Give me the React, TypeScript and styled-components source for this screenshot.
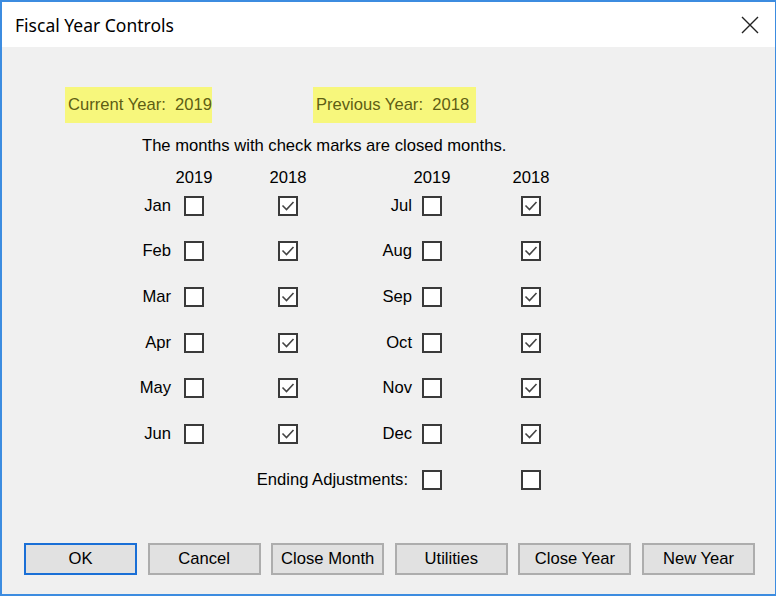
import React from 'react'
import styled, { createGlobalStyle } from 'styled-components'

const GlobalStyle = createGlobalStyle`
  html, body {
    margin: 0;
    padding: 0;
    background: #ffffff;
  }
  #root {
    width: 776px;
    height: 596px;
  }
`

const Window = styled.div`
  box-sizing: border-box;
  width: 776px;
  height: 596px;
  border: 2px solid #3c8ce0;
  border-right-width: 1px;
  display: flex;
  flex-direction: column;
  background: #f0f0f0;
`

const TitleBar = styled.div`
  height: 45px;
  flex-shrink: 0;
  background: #ffffff;
  display: flex;
  align-items: center;
  justify-content: space-between;
  padding: 0 16px 0 13px;
`

const Title = styled.span`
  font-family: "Noto Sans", "Open Sans", sans-serif;
  font-size: 17.5px;
  color: #000;
`

const CloseIcon = styled.svg`
  width: 18px;
  height: 18px;
`

const Body = styled.div`
  flex: 1;
  display: flex;
  flex-direction: column;
  font-family: "Liberation Sans", Arial, sans-serif;
  font-size: 16.6px;
  color: #000;
`

const YearRow = styled.div`
  display: flex;
  margin-top: 40px;
  padding-left: 63px;
  gap: 101px;
`

const Highlight = styled.div<{ $w: number }>`
  width: ${p => p.$w}px;
  height: 36px;
  background: #f7f77c;
  color: #5e5e14;
  display: flex;
  align-items: center;
  padding-left: 3px;
  box-sizing: border-box;
  white-space: pre;
`

const Note = styled.div`
  margin-top: 13px;
  padding-left: 140px;
  line-height: 20px;
`

const MonthGrid = styled.div`
  display: grid;
  margin-top: 17px;
  margin-left: 88px;
  grid-template-columns: 84px 40px 54px 40px 104px 40px 59px 40px;
  grid-template-rows: 10px repeat(7, 45.67px);
  align-items: center;
`

const Head = styled.div<{ $col: number }>`
  grid-column: ${p => p.$col};
  grid-row: 1;
  line-height: 10px;
  text-align: center;
`

const Label = styled.div<{ $col: string; $pad?: number }>`
  grid-column: ${p => p.$col};
  text-align: right;
  padding-right: ${p => p.$pad ?? 3}px;
  line-height: 20px;
`

const Cell = styled.div<{ $col: number }>`
  grid-column: ${p => p.$col};
  display: flex;
  justify-content: center;
`

const Box = styled.div`
  width: 20px;
  height: 20px;
  box-sizing: border-box;
  border: 2px solid #3a3a3a;
  background: #ffffff;
  display: flex;
  align-items: center;
  justify-content: center;
`

const ButtonRow = styled.div`
  margin-top: auto;
  padding: 0 0 19px 22px;
  display: flex;
  gap: 10.6px;
`

const Button = styled.div<{ $default?: boolean }>`
  width: 113px;
  height: 32px;
  box-sizing: border-box;
  background: #e1e1e1;
  border: 2px solid ${p => (p.$default ? '#1a6fd6' : '#adadad')};
  display: flex;
  align-items: center;
  justify-content: center;
  font-family: "Liberation Sans", Arial, sans-serif;
  font-size: 16.6px;
  color: #000;
`

function Check({ on }: { on: boolean }) {
  return (
    <Box>
      {on && (
        <svg width="16" height="16" viewBox="0 0 16 16">
          <path d="M2.5 7.5 L6.5 11.5 L13.5 4" fill="none" stroke="#444" strokeWidth="1.6" />
        </svg>
      )}
    </Box>
  )
}

const left = ['Jan', 'Feb', 'Mar', 'Apr', 'May', 'Jun']
const right = ['Jul', 'Aug', 'Sep', 'Oct', 'Nov', 'Dec']

export default function App() {
  return (
    <>
      <GlobalStyle />
      <Window>
        <TitleBar>
          <Title>Fiscal Year Controls</Title>
          <CloseIcon viewBox="0 0 18 18">
            <path d="M1 1 L17 17 M17 1 L1 17" stroke="#222" strokeWidth="1.4" />
          </CloseIcon>
        </TitleBar>
        <Body>
          <YearRow>
            <Highlight $w={147}>{'Current Year:  2019'}</Highlight>
            <Highlight $w={163}>{'Previous Year:  2018'}</Highlight>
          </YearRow>
          <Note>The months with check marks are closed months.</Note>
          <MonthGrid>
            <Head $col={2}>2019</Head>
            <Head $col={4}>2018</Head>
            <Head $col={6}>2019</Head>
            <Head $col={8}>2018</Head>
            {left.map((m, i) => (
              <React.Fragment key={m}>
                <Label $col="1" style={{ gridRow: i + 2 }}>{m}</Label>
                <Cell $col={2} style={{ gridRow: i + 2 }}><Check on={false} /></Cell>
                <Cell $col={4} style={{ gridRow: i + 2 }}><Check on={true} /></Cell>
                <Label $col="5" $pad={0} style={{ gridRow: i + 2 }}>{right[i]}</Label>
                <Cell $col={6} style={{ gridRow: i + 2 }}><Check on={false} /></Cell>
                <Cell $col={8} style={{ gridRow: i + 2 }}><Check on={true} /></Cell>
              </React.Fragment>
            ))}
            <Label $col="1 / 6" $pad={4} style={{ gridRow: 8 }}>Ending Adjustments:</Label>
            <Cell $col={6} style={{ gridRow: 8 }}><Check on={false} /></Cell>
            <Cell $col={8} style={{ gridRow: 8 }}><Check on={false} /></Cell>
          </MonthGrid>
          <ButtonRow>
            <Button $default>OK</Button>
            <Button>Cancel</Button>
            <Button>Close Month</Button>
            <Button>Utilities</Button>
            <Button>Close Year</Button>
            <Button>New Year</Button>
          </ButtonRow>
        </Body>
      </Window>
    </>
  )
}
